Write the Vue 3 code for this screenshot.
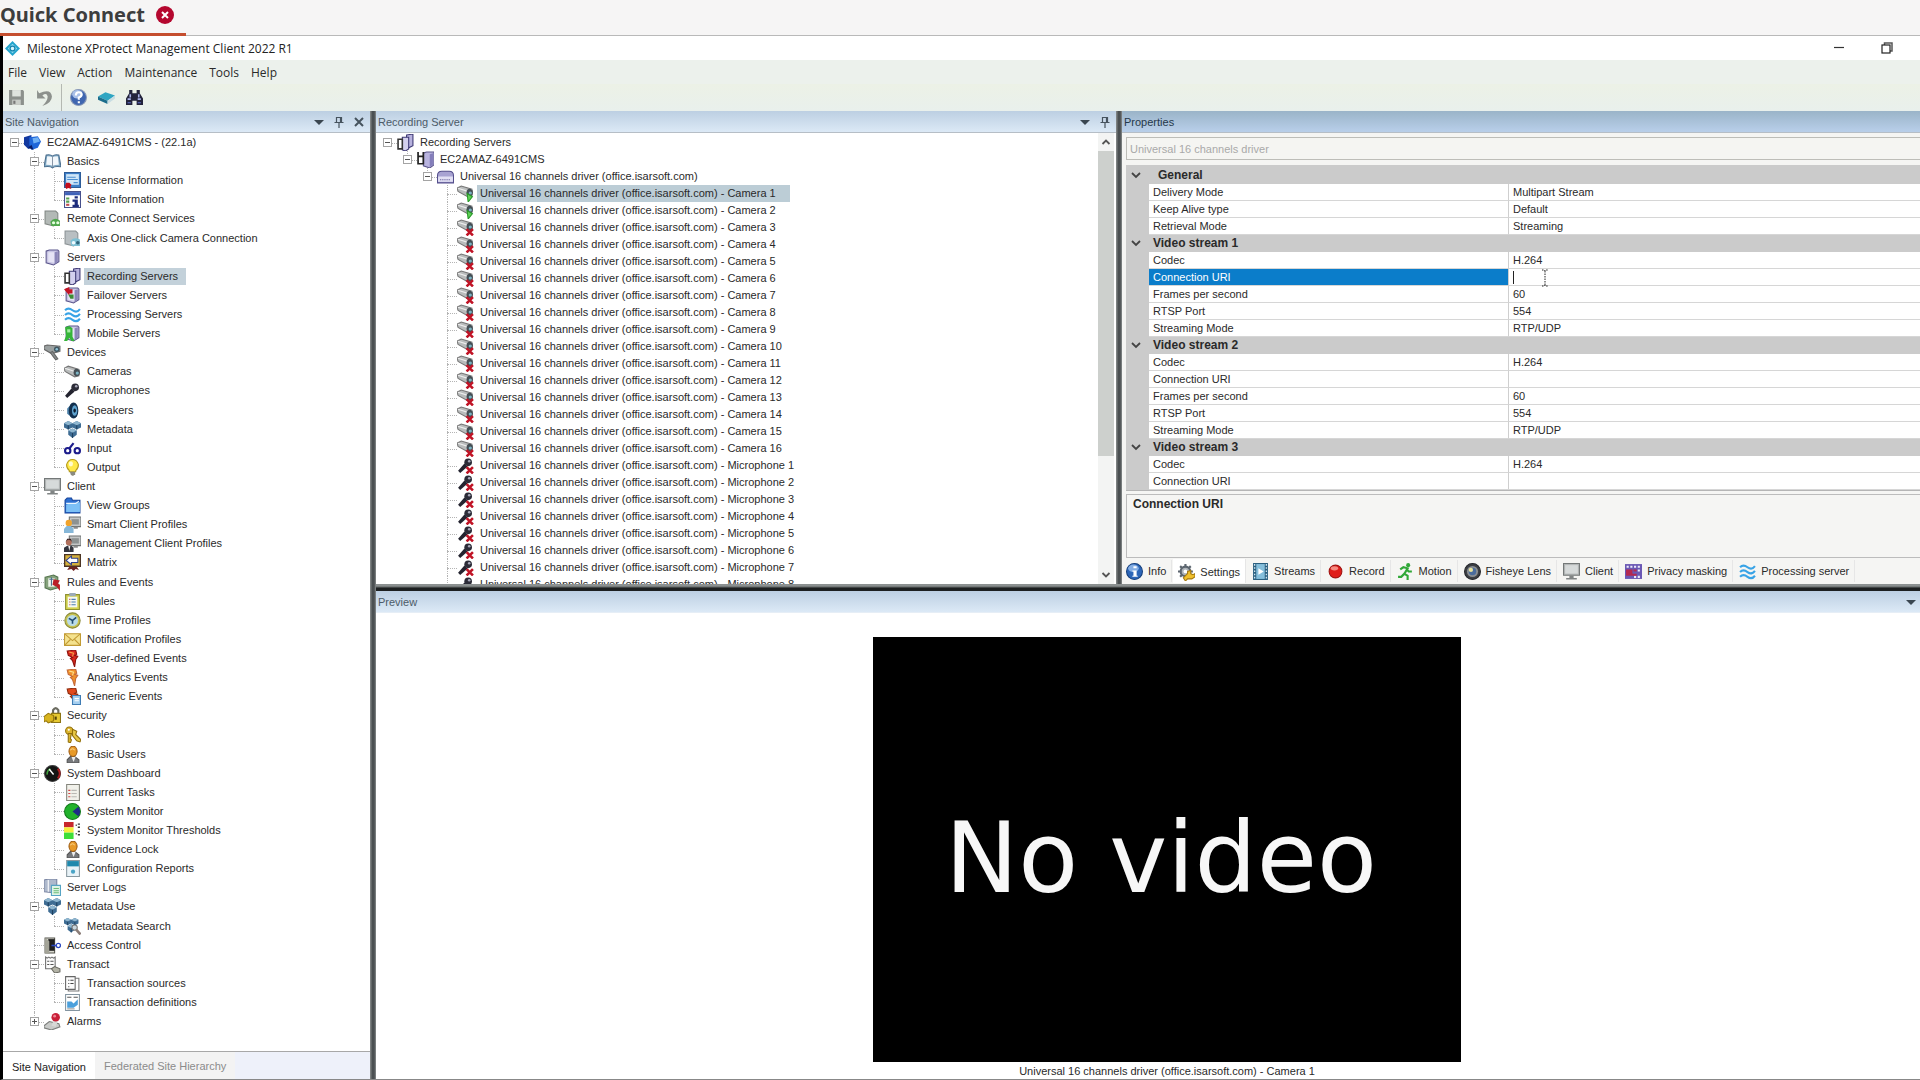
<template>
  <div class="desktop">

    <!-- ===== session tabs ===== -->
    <div class="session-bar">
      <div class="session-tab">
        <span>Quick Connect</span>
        <button class="session-close" aria-label="Close session">
          <svg viewBox="0 0 18 18"><circle cx="9" cy="9" r="9" fill="#b5082f" /><path d="M6 6l6 6M12 6l-6 6" stroke="#fff" stroke-width="2" /></svg>
        </button>
      </div>
    </div>

    <div class="window">
      <!-- ===== title ===== -->
      <div class="title-bar">
        <svg class="logo" viewBox="0 0 16 16"><path d="M8 0l8 8-8 8-8-8z" fill="#23a3cc" /><path d="M8 3l5 5-5 5-5-5z" fill="#8fdcf2" /><circle cx="8" cy="8" r="2.6" fill="#d6f5fd" stroke="#1583ad" stroke-width="1.4" /></svg>
        <span class="title-text">Milestone XProtect Management Client 2022 R1</span>
        <button class="win-btn" aria-label="Minimize"><svg viewBox="0 0 12 12"><path d="M1 5.500h10" stroke="#333" stroke-width="1.200" /></svg></button>
        <button class="win-btn" aria-label="Restore"><svg viewBox="0 0 12 12"><path d="M3.500 3V1h7.500v8H9" fill="none" stroke="#555" stroke-width="1.500" /><rect x="1" y="3" width="8" height="8" fill="#fff" stroke="#222" stroke-width="1.200" /></svg></button>
      </div>

      <!-- ===== menu + toolbar ===== -->
      <div class="menu-bar">
        <button v-for="m in menus" :key="m">{{ m }}</button>
      </div>
      <div class="tool-bar">
        <template v-for="t in tools" :key="t.icon">
          <span v-if="t.sep" class="tool-sep"></span>
          <button :aria-label="t.label"><svg class="icon" viewBox="0 0 16 16" v-html="icons[t.icon]"></svg></button>
        </template>
      </div>

      <div class="workspace">
        <!-- ===== site navigation ===== -->
        <section class="pane nav-pane">
          <header class="pane-head">
            <span>Site Navigation</span>
            <button aria-label="Options"><svg viewBox="0 0 12 12" v-html="icons.down"></svg></button>
            <button aria-label="Pin"><svg viewBox="0 0 12 12" v-html="icons.pin"></svg></button>
            <button aria-label="Close"><svg viewBox="0 0 12 12" v-html="icons.close"></svg></button>
          </header>
          <ul class="tree nav-tree" role="tree">
            <li v-for="row in navRows" :key="row.label" role="treeitem">
              <span v-for="(g, i) in row.guides" :key="i" class="guide" :class="g">
                <i v-if="g.includes('box')" class="box" :class="{ closed: row.closed }"></i>
              </span>
              <svg class="icon" viewBox="0 0 16 16" v-html="icons[row.icon]"></svg>
              <span class="label" :class="{ selected: navSelected === row.label }" @click="navSelected = row.label">{{ row.label }}</span>
            </li>
          </ul>
          <footer class="nav-tabs">
            <button class="active">Site Navigation</button>
            <button>Federated Site Hierarchy</button>
          </footer>
        </section>

        <div class="v-split"></div>

        <div class="right-side">
          <div class="top-panes">
            <!-- ===== recording server ===== -->
            <section class="pane rec-pane">
              <header class="pane-head">
                <span>Recording Server</span>
                <button aria-label="Options"><svg viewBox="0 0 12 12" v-html="icons.down"></svg></button>
                <button aria-label="Pin"><svg viewBox="0 0 12 12" v-html="icons.pin"></svg></button>
              </header>
              <div class="rec-body">
                <ul class="tree rec-tree" role="tree">
                  <li v-for="row in recRows" :key="row.label" role="treeitem">
                    <span v-for="(g, i) in row.guides" :key="i" class="guide" :class="g">
                      <i v-if="g.includes('box')" class="box"></i>
                    </span>
                    <svg class="icon" viewBox="0 0 16 16" v-html="icons[row.icon]"></svg>
                    <span class="label" :class="{ selected: recSelected === row.label }" @click="recSelected = row.label">{{ row.label }}</span>
                  </li>
                </ul>
                <div class="scroll">
                  <svg viewBox="0 0 12 12"><path d="M2.500 8L6 4.500 9.500 8" fill="none" stroke="#555" stroke-width="1.800" /></svg>
                  <div class="thumb"></div>
                  <div class="track"></div>
                  <svg viewBox="0 0 12 12"><path d="M2.500 4L6 7.500 9.500 4" fill="none" stroke="#555" stroke-width="1.800" /></svg>
                </div>
              </div>
            </section>

            <div class="v-split"></div>

            <!-- ===== properties ===== -->
            <section class="pane prop-pane">
              <header class="pane-head active">
                <span>Properties</span>
              </header>
              <div class="prop-body">
                <input class="driver" type="text" value="Universal 16 channels driver" aria-label="Driver" disabled />
                <div class="grid-box">
                  <table>
                    <colgroup>
                      <col class="col-gutter" />
                      <col class="col-name" />
                      <col />
                    </colgroup>
                    <tbody>
                      <template v-for="g in groups" :key="g.name">
                        <tr class="group">
                          <td class="gutter"><svg viewBox="0 0 12 12"><path d="M2 4l4 4 4-4" fill="none" stroke="#444" stroke-width="1.800" /></svg></td>
                          <th colspan="2" :class="{ inset: g.name === 'General' }">{{ g.name }}</th>
                        </tr>
                        <tr v-for="p in g.props" :key="g.name + p[0]" :class="{ current: p[2] }">
                          <td class="gutter"></td>
                          <td class="name">{{ p[0] }}</td>
                          <td class="value">
                            <div v-if="p[2]" class="editing">
                              <span class="caret"></span>
                              <input v-model="uri" type="text" aria-label="Connection URI" />
                              <svg class="ibeam" viewBox="0 0 8 18"><path d="M1 1h2l1 1 1-1h2M4 2v14M1 17h2l1-1 1 1h2" fill="none" stroke="#222" stroke-dasharray="1.500 1" /></svg>
                            </div>
                            <template v-else>{{ p[1] }}</template>
                          </td>
                        </tr>
                      </template>
                    </tbody>
                  </table>
                </div>
                <div class="help-box">Connection URI</div>
                <nav class="prop-tabs">
                  <button v-for="t in tabs" :key="t.label" :class="{ active: tab === t.label }" @click="tab = t.label">
                    <svg class="icon" viewBox="0 0 16 16" v-html="icons[t.icon]"></svg>
                    <span>{{ t.label }}</span>
                  </button>
                </nav>
              </div>
            </section>
          </div>

          <div class="h-split"></div>

          <!-- ===== preview ===== -->
          <section class="pane preview-pane">
            <header class="pane-head">
              <span>Preview</span>
              <button aria-label="Options"><svg viewBox="0 0 12 12" v-html="icons.down"></svg></button>
            </header>
            <div class="stage">
              <div class="video">No video</div>
              <div class="caption">{{ recSelected }}</div>
            </div>
          </section>
        </div>
      </div>
    </div>
  </div>
</template>

<script setup>
import { ref } from "vue";

const menus = ["File", "View", "Action", "Maintenance", "Tools", "Help"];

const tools = [
  { icon: "save", label: "Save" },
  { icon: "undo", label: "Undo" },
  { icon: "help", label: "Help", sep: true },
  { icon: "manual", label: "Manual" },
  { icon: "binoculars", label: "Find" }
];

/* ===== icon pieces used more than once ===== */
const tower = '<path d="M2 2l3-1h8l1 1v10l-5 3-7-2z" fill="#c9c6e4" stroke="#5b568c"/><path d="M4 3h6v10l-6-1z" fill="#e6e4f5"/><path d="M10 3l3-1v10l-3 2z" fill="#8b86b8"/>';
const screen = '<path d="M5 1h11v9H5z" fill="#c4c6c6" stroke="#6e7272"/><path d="M7 3h7v5H7z" fill="#8d9292"/><path d="M9 10h4v2H9z" fill="#8a8a8a"/>';
const cross = '<path d="M9 9.500l6 6M15 9.500l-6 6" stroke="#c01426" stroke-width="2.400"/>';
const camBody = '<path d="M0 3l4-2 10 3v6l-4 1L1 6z" fill="#b9bcbc" stroke="#777"/><path d="M1 3l9 3 4-2" fill="none" stroke="#eee"/><ellipse cx="12" cy="7" rx="3" ry="3.500" fill="#454f55"/><circle cx="12.500" cy="7.500" r="1.500" fill="#7bb4c4"/>';
const micBody = '<path d="M1 13l6-7 3 3-7 6z" fill="#23232f"/><circle cx="10.500" cy="5" r="3.600" fill="#2c2c38"/><circle cx="11.500" cy="4" r="1.200" fill="#aab"/>';
const cubes = '<path d="M0 2l4-2 4 2v4L4 8 0 6zM8 2l4-2 4 2v4l-4 2-4-2zM4 9l4-2 4 2v4l-4 3-4-3z" fill="#3e6c93"/><path d="M0 2l4-2 4 2-4 2zM8 2l4-2 4 2-4 2zM4 9l4-2 4 2-4 2z" fill="#8fb6cf"/><path d="M4 4v4M12 4v4M8 11v5" stroke="#1f4260"/>';
const person = '<path d="M3 16v-3l3-3h4l4 3v3z" fill="#77797c" stroke="#555"/><path d="M7 10l2 5 2-5z" fill="#eee"/><ellipse cx="8.500" cy="5" rx="3.800" ry="4.800" fill="#e89a28" stroke="#9c5a10"/><path d="M6 4q2-3 4 0" stroke="#f9d185" fill="none"/>';
const waves = '<path d="M1 4q3-3 7 0t7-1M1 8.500q3-3 7 0t7-1M1 13q3-3 7 0t7-1" fill="none" stroke="#38a3e6" stroke-width="2"/>';
const boltShape = '<path d="M3 1l8-1 1 4-2 1 3 1-2 3-1 7-2-6-2-2 2-1-4-2z"';

const icons = {
  down: '<path d="M1 4h10L6 9z" fill="#3a4650"/>',
  pin: '<path d="M3.500 1.500h5v5h-5zM1.500 6.500h9M6 7v5M7.500 2v4" fill="none" stroke="#46535e" stroke-width="1.200"/>',
  close: '<path d="M2 2l8 8M10 2l-8 8" stroke="#46535e" stroke-width="2"/>',
  save: '<path d="M1 1h13l1 1v13H1z" fill="#8c908c"/><path d="M4 1h8v6H4z" fill="#dfe3de"/><path d="M4 10h8v5H4z" fill="#c9cdc8"/><path d="M5 11h2v3H5z" fill="#777"/>',
  undo: '<path d="M1 1v8h8L6 6q4-3 5 1 0 4-5 9 9-3 9-9-1-8-12-3z" fill="#8d918d"/>',
  help: '<circle cx="8" cy="8" r="7.500" fill="#3f66b0" stroke="#8c9bb8"/><ellipse cx="7" cy="5" rx="5" ry="4" fill="#a9c0e8"/><path d="M5.500 6q0-3 2.700-3t2.600 2.400Q10.800 7 8.300 8v2M8.300 11.500v2" fill="none" stroke="#fff" stroke-width="2"/>',
  manual: '<path d="M0 7l7-4 9 3-7 5z" fill="#2fa5c2"/><path d="M0 7v3l9 4v-3z" fill="#1b6d8c"/><path d="M9 11v3l7-5V6z" fill="#c8dde3"/>',
  binoculars: '<path d="M3 1h3v3h4V1h3v3l3 5v6h-6v-4H6v4H0V9l3-5z" fill="#23233c"/><path d="M1.500 9.500h3M11 9.500h3M4 5v3M12 5v3" stroke="#aab2e8" stroke-width="1.500"/><path d="M1.500 13h3M11 13h3" stroke="#5f6dc8"/>',
  site: '<path d="M0 3l7-2v12l-3 1-4-4z" fill="#1239a0"/><path d="M5 3l8-1 3 5-3 6-6 2-2-5z" fill="#1f66d8"/><path d="M8 4l5-1 2 4-6 2z" fill="#6fb0f4"/><path d="M7 10l2 5-5-2z" fill="#0a1d66"/>',
  book: '<path d="M0 13L2 2q4-1 6 1 2-2 6-1l2 11q-6-1-8 1-2-2-8-1z" fill="#7fa8c4" stroke="#4c6f8e"/><path d="M2 11l1-8q4 0 5 1v8q-2-1-6-1zM14 11l-1-8q-4 0-5 1v8q2-1 6-1z" fill="#f2f7fb"/><path d="M8 3v10" stroke="#8896a8"/>',
  license: '<path d="M.500.500h15v14H.500z" fill="#3d7fc8" stroke="#2d5c98"/><path d="M2 2h12v10H2z" fill="#cfe6f8"/><path d="M3 5h8M3 7h10M9 10h4" stroke="#4c8fd0"/><path d="M2 10h3l2 2-1 2 1 2-3-1-2 1-1-3z" fill="#c40e1c"/>',
  siteinfo: '<path d="M.500.500h15v15H.500z" fill="#fff" stroke="#46508c"/><path d="M1 1h14v3H1z" fill="#3f62b8"/><path d="M2 6h3v2H2zM2 9h3v2H2z" fill="#58a050"/><path d="M2 12h3v2H2z" fill="#c05050"/><path d="M10 5h3v2h-3zM8 8h5v5h1v2H8v-2h2v-3H8z" fill="#1c2c7c"/>',
  remote: '<path d="M1 1h10l2 2v9l-4 3-8-2z" fill="#b3b9b6" stroke="#808683"/><path d="M6 11q4-5 9-1v5H7z" fill="#4fa84c"/><circle cx="9" cy="12" r="1.500" fill="#e7ffe0"/><circle cx="13" cy="12" r="1.500" fill="#e7ffe0"/>',
  axis: '<path d="M1 1h10l2 2v9l-4 3-8-2z" fill="#b9bfc2" stroke="#8a9194"/><path d="M6 10q4-4 9-1v6H7z" fill="#7ec0d4"/><circle cx="9" cy="12" r="1.700" fill="#effaff"/><circle cx="13" cy="12" r="1.700" fill="#31647a"/>',
  server: tower,
  servers: '<path d="M9 1l6-1v11l-4 2-2-1z" fill="#b7b2de" stroke="#3d3874"/><path d="M5 3h6v11l-3 2-3-1z" fill="#d3d0ee" stroke="#3d3874"/><path d="M1 5h4v9H1z" fill="#fff" stroke="#333" stroke-width="1.500"/>',
  recserver: '<path d="M6 2l3-1h7v12l-4 3-6-2z" fill="#b9b4e0" stroke="#5b568c"/><path d="M12 3l3-1v11l-3 2z" fill="#837dba"/><path d="M1 1v11h5V1M1 5h5" fill="none" stroke="#222" stroke-width="1.600"/>',
  failover: tower + '<path d="M0 2l5-2v2h3v4H5v2z" fill="#c41424"/><path d="M4 7h5v4H6z" fill="#3c8c34"/>',
  waves,
  mobile: tower + '<path d="M1 2l4-1 3 2v8l2 4H7l-2-3-2 3H0l2-5z" fill="#36b53a"/><path d="M3 4h3v3H3z" fill="#a4eea0"/>',
  devices: '<path d="M0 2l3-1 12 1v5l-8 2-7-4z" fill="#9aa0a0" stroke="#666"/><path d="M6 8l2 3 3 4 2-1-5-7z" fill="#888d8d" stroke="#666"/><circle cx="12" cy="5" r="2.600" fill="#3f5560"/><circle cx="12" cy="5" r="1.200" fill="#8dc3d6"/>',
  camera: '<g transform="translate(0 2)">' + camBody + '</g>',
  camOn: camBody + '<path d="M9.500 8l5 3-4 5z" fill="#62d058" stroke="#279a28"/>',
  camOff: camBody + cross,
  mic: micBody,
  micOff: micBody + cross,
  speaker: '<path d="M3 6l5-5v14l-5-4z" fill="#4a7fa8"/><ellipse cx="9" cy="8" rx="4.500" ry="7.500" fill="#12304e"/><ellipse cx="10" cy="8" rx="2.500" ry="5" fill="#5fa3cf"/><ellipse cx="10" cy="8" rx="1.200" ry="2" fill="#0c1c30"/>',
  metadata: cubes,
  metasearch: '<g transform="scale(.85)">' + cubes + '</g><circle cx="10" cy="9" r="2.500" fill="#c9d6de" stroke="#777"/><path d="M11.500 11l4 4.500" stroke="#8b7d78" stroke-width="2.500"/>',
  input: '<circle cx="3.500" cy="10" r="2.500" fill="none" stroke="#1c1c8c" stroke-width="2"/><circle cx="12.500" cy="10" r="2.500" fill="none" stroke="#1c1c8c" stroke-width="2"/><path d="M5 8l4-5" stroke="#1c1c8c" stroke-width="2"/>',
  bulb: '<path d="M5 11Q2 8 2.500 5 4 .500 8 .500T13.500 5q.500 3-2.500 6v1H5z" fill="#ffe94a" stroke="#b59a18"/><ellipse cx="6.500" cy="4.500" rx="2" ry="2.500" fill="#fffbd0"/><path d="M5.500 12h5v3h-1l-1 1-2-1z" fill="#8b8b80"/>',
  monitor: '<path d="M.500.500h15v11H.500z" fill="#b4b8b8" stroke="#747878"/><path d="M2 2h12v8H2z" fill="#d6dada"/><path d="M6 12h4v2h3v1.500H3V14h3z" fill="#808484"/>',
  folder: '<path d="M1 3l2-2h4l1 2h7v12H1z" fill="#2c6fd0" stroke="#17459c"/><path d="M2 7l4-1 9-1v9H2z" fill="#7cc0f6"/><path d="M2 6h9l3-2" fill="none" stroke="#eaf6ff"/>',
  smart: screen + '<path d="M0 16v-4l3-3h3l3 3v4z" fill="#86b7d8"/><circle cx="4.500" cy="6.500" r="3" fill="#f0a32c"/>',
  mgmt: screen + '<path d="M0 16v-4l3-2h4l2 2v4z" fill="#33353e"/><path d="M4 10h2l-1 5z" fill="#f4f4f4"/><circle cx="4.500" cy="7" r="2.800" fill="#b0705c"/><path d="M1.500 6.500q3-4 6 0l-1-3H3z" fill="#3a2020"/>',
  matrix: '<path d="M.500.500h15v11H.500z" fill="#d6b23e" stroke="#4b3424" stroke-width="1.500"/><path d="M2 6l5-4v2h6v4H7v2z" fill="#fff" stroke="#2e3f8c"/><path d="M5 12h7l2 3-3-1-2 2-2-2-4 1z" fill="#6f2420"/>',
  rulesevents: '<path d="M1 3l8-2 4 2v10l-7 2-5-2z" fill="#86a37c" stroke="#54744e"/><path d="M4 4h6v8H4z" fill="#eef5ea"/><path d="M5 5h4M7 3v8" stroke="#4c6e90"/><path d="M9 5l6 1-2 3 2 1v6l-3-4-4-2z" fill="#bb1e28"/>',
  rules: '<path d="M1.500 1.500h13v14h-13z" fill="#d3d24e" stroke="#8e9030"/><path d="M3.500 3.500h9v10h-9z" fill="#f6faf2"/><path d="M5 0h6v3H5z" fill="#9cabb8"/><path d="M5 6h1M5 8.500h1M5 11h1" stroke="#c03838"/><path d="M7 6h4M7 8.500h4M7 11h4" stroke="#4c7cb0"/>',
  clock: '<circle cx="8" cy="8" r="7.200" fill="#c8c452" stroke="#8a8a3a"/><circle cx="8" cy="8" r="5.200" fill="#b9dbe8"/><path d="M4.500 6L8 8l3.500-3M8 8v3" stroke="#1f4c70" fill="none" stroke-width="1.500"/>',
  mail: '<path d="M.500 2.500h15v11H.500z" fill="#f4e28e" stroke="#c29b34"/><path d="M1 3l7 6 7-6M1 13l5-5M15 13l-5-5" fill="none" stroke="#c29b34"/>',
  boltred: boltShape + ' fill="#d8281c" stroke="#8c120c"/><path d="M5 2l4 1-1 3" stroke="#f7a04a" fill="none"/>',
  boltorange: boltShape + ' fill="#f0912a" stroke="#c46a3a"/><path d="M5 2l4 1-1 3" stroke="#fde08c" fill="none"/>',
  generic: boltShape + ' fill="#e0481c" stroke="#8c2a0c"/><path d="M8 7h7.500v8.500H8z" fill="#a5cff0" stroke="#3f7cb4"/><path d="M10 10h4M10 12h4" stroke="#fff"/>',
  lock: '<path d="M8.500 6V3q2.500-4 5 0v4" fill="none" stroke="#6b6b60" stroke-width="2"/><path d="M7 6h8.500v8.500H7z" fill="#e5c832" stroke="#8c7414"/><path d="M0 9l4-3 5 2v5l-5 2-2-2-2 1z" fill="#d8b41e" stroke="#97780e"/><path d="M11 9v3" stroke="#554408" stroke-width="2"/>',
  keys: '<circle cx="5" cy="4.500" r="3.500" fill="#dcb52e" stroke="#92700c"/><path d="M4 7v8l2 1 1-3-1-1 1-5z" fill="#dcb52e" stroke="#92700c"/><path d="M8 3l4 2-1 3 5 5-1 2-3-1-4-5z" fill="#e8c845" stroke="#92700c"/><circle cx="4.500" cy="3.500" r="1" fill="#fff"/>',
  user: person,
  gauge: '<circle cx="8" cy="8" r="7.500" fill="#141414" stroke="#404040"/><path d="M13 3.500a7 7 0 010 9" stroke="#a81c20" stroke-width="2" fill="none"/><path d="M3 9a5.500 5.500 0 013-5.500" stroke="#3f9e3c" stroke-width="1.500" fill="none"/><path d="M5 4l4 5" stroke="#fff" stroke-width="1.400"/>',
  tasks: '<path d="M2.500.500h12v15h-12z" fill="#f1f1ea" stroke="#85857c"/><path d="M4 6h2M4 9h2M4 12h2" stroke="#d04848"/><path d="M7 6h5M7 9h5M7 12h5" stroke="#b9b9b4"/>',
  pie: '<circle cx="8" cy="8" r="7.500" fill="#22b22c" stroke="#147a1c"/><path d="M8 8l5.500-4.500a7.500 7.500 0 010 9z" fill="#1e2a86"/>',
  thresholds: '<path d="M0 0h9v5H0z" fill="#c8282c"/><path d="M0 5h9v5H0z" fill="#f5ee3c"/><path d="M0 10h9v6H0z" fill="#3ede3a"/><path d="M11 3h1M13 2h2M13 5h2M11 11h1M13 9h2M13 12h2" stroke="#333" stroke-width="1.400"/>',
  report: '<path d="M2.500.500h12v15h-12z" fill="#e9f3f8" stroke="#8898a0"/><path d="M3 1h11v5H3z" fill="#1f88ac"/><circle cx="8.500" cy="11" r="2" fill="#4aa4c6"/>',
  logs: '<path d="M0 1l4-1h8v11l-3 2-9-1z" fill="#aeb9cc" stroke="#7782a0"/><path d="M4 1v11" stroke="#fff"/><path d="M7 6h8.500v9.500H7z" fill="#dff4e4" stroke="#56a4c4"/><path d="M9 9h5M9 11h5M9 13h5" stroke="#6cbc78"/>',
  door: '<path d="M1 1h9v14H1z" fill="#d9d9cf" stroke="#55554c"/><path d="M4 2h6v11H4z" fill="#1e1e1e"/><path d="M1 1l4 3v12l-4-1z" fill="#a4a498"/><circle cx="13.500" cy="8" r="2" fill="#fff" stroke="#2c48c0" stroke-width="1.200"/><path d="M7 8h5" stroke="#2c48c0" stroke-width="1.500"/>',
  transact: '<path d="M1.500 1l1.500 1 1.500-1L6 2l1.500-1L9 2l1.500-1v11h-9z" fill="#fbfbfb" stroke="#6f6f6f"/><path d="M3 5h2M3 8h2M6 5h3M6 8h3" stroke="#555"/><path d="M7 12l3-2 5 2v3l-5 1z" fill="#b3b3a6" stroke="#686860"/>',
  sources: '<path d="M4 3h10v12H4z" fill="#fff" stroke="#777"/><path d="M1.500 1.500h9v12h-9z" fill="#fcfcfc" stroke="#666"/><path d="M4 5h1M4 8h1M4 11h1M6 5h3M6 8h3" stroke="#444"/>',
  defs: '<path d="M1.500.500h13v15h-13z" fill="#fff" stroke="#8394a0"/><path d="M3 3h4M9 3h4" stroke="#555"/><path d="M3 7h4l2 2 4-4v5l-4 3H3z" fill="#4ba0dc"/><path d="M3 14h7" stroke="#999"/>',
  alarm: '<path d="M0 12l5-4 9 2 1 3-8 3-7-2z" fill="#c8cac8" stroke="#7b7d7b"/><path d="M9 7l-2 5 4 1 2-5z" fill="#d7d9d7"/><circle cx="11" cy="4" r="4" fill="#c91f38"/><circle cx="10" cy="3" r="1.300" fill="#ee8594"/>',
  box16: '<path d="M.500 7q0-4 4-4h7q4 0 4 4v7H.500z" fill="#a8a3d2" stroke="#544f8c"/><path d="M1 8h14v5H1z" fill="#e2e0f4"/><path d="M3 11h10" stroke="#544f8c" stroke-dasharray="1 1"/>',
  info: '<circle cx="8" cy="8" r="7.500" fill="#2c66b8" stroke="#17407c"/><ellipse cx="7" cy="5" rx="5" ry="3.500" fill="#84aee4"/><path d="M7 3h3v2H7zM6 7h4v5h1v1H6v-1h1V8H6z" fill="#fff"/>',
  gear: '<circle cx="7" cy="7" r="4.500" fill="#aeb4ba" stroke="#5d6670" stroke-width="2"/><path d="M7 0v3M7 11v3M0 7h3M11 7h3M2 2l2 2M12 2l-2 2M2 12l2-2" stroke="#5d6670" stroke-width="2"/><circle cx="7" cy="7" r="1.800" fill="#fff"/><path d="M5 13l4-4V7l3-1v3l2 1 2-1v3l-3 2H9l-2 2z" fill="#f0c02c" stroke="#a67a10"/>',
  film: '<path d="M1 0h14v16H1z" fill="#2a5f80"/><path d="M4 1h8v14H4z" fill="#86bfdc"/><path d="M6 5l5 3-5 3z" fill="#fff"/><path d="M2.500 1v14M13.500 1v14" stroke="#d4e8f2" stroke-width="1.200" stroke-dasharray="1.500 1.500"/>',
  record: '<circle cx="8" cy="8" r="6" fill="#e01d1a" stroke="#a01210"/><ellipse cx="7" cy="5" rx="3.500" ry="2" fill="#f58a80"/>',
  motion: '<circle cx="10.500" cy="2" r="1.900" fill="#31a838"/><path d="M3 6l3-2 4 1-3 5 3 2v4M7 10l-3 3H1M9 6l2 2h3" fill="none" stroke="#31a838" stroke-width="2"/>',
  lens: '<circle cx="8" cy="8" r="7.500" fill="#3c3f44" stroke="#26282c"/><circle cx="8" cy="8" r="5.200" fill="#8b9094"/><circle cx="8" cy="8" r="3.500" fill="#4a6c9c"/><circle cx="6.500" cy="6.500" r="2" fill="#e9e39c"/>',
  mask: '<path d="M0 1h16v14H0z" fill="#6a58b4"/><path d="M1.500 2.500h2v2h-2zM5 2.500h2v2H5zM8.500 2.500h2v2h-2zM12 2.500h2v2h-2zM12 6h2v2h-2zM12 12h2v2h-2zM8.500 12h2v2h-2z" fill="#eceafa"/><path d="M1 6h6v4h4v2H1zM8 6h3v2H8z" fill="#b42850"/>'
};

/* ===== trees: [depth, icon, label, closed] ===== */
const nav = [
  [0, "site", "EC2AMAZ-6491CMS - (22.1a)"],
  [1, "book", "Basics"],
  [2, "license", "License Information"],
  [2, "siteinfo", "Site Information"],
  [1, "remote", "Remote Connect Services"],
  [2, "axis", "Axis One-click Camera Connection"],
  [1, "server", "Servers"],
  [2, "servers", "Recording Servers"],
  [2, "failover", "Failover Servers"],
  [2, "waves", "Processing Servers"],
  [2, "mobile", "Mobile Servers"],
  [1, "devices", "Devices"],
  [2, "camera", "Cameras"],
  [2, "mic", "Microphones"],
  [2, "speaker", "Speakers"],
  [2, "metadata", "Metadata"],
  [2, "input", "Input"],
  [2, "bulb", "Output"],
  [1, "monitor", "Client"],
  [2, "folder", "View Groups"],
  [2, "smart", "Smart Client Profiles"],
  [2, "mgmt", "Management Client Profiles"],
  [2, "matrix", "Matrix"],
  [1, "rulesevents", "Rules and Events"],
  [2, "rules", "Rules"],
  [2, "clock", "Time Profiles"],
  [2, "mail", "Notification Profiles"],
  [2, "boltred", "User-defined Events"],
  [2, "boltorange", "Analytics Events"],
  [2, "generic", "Generic Events"],
  [1, "lock", "Security"],
  [2, "keys", "Roles"],
  [2, "user", "Basic Users"],
  [1, "gauge", "System Dashboard"],
  [2, "tasks", "Current Tasks"],
  [2, "pie", "System Monitor"],
  [2, "thresholds", "System Monitor Thresholds"],
  [2, "user", "Evidence Lock"],
  [2, "report", "Configuration Reports"],
  [1, "logs", "Server Logs"],
  [1, "metadata", "Metadata Use"],
  [2, "metasearch", "Metadata Search"],
  [1, "door", "Access Control"],
  [1, "transact", "Transact"],
  [2, "sources", "Transaction sources"],
  [2, "defs", "Transaction definitions"],
  [1, "alarm", "Alarms", true]
];

const driver = "Universal 16 channels driver (office.isarsoft.com)";
const rec = [
  [0, "servers", "Recording Servers"],
  [1, "recserver", "EC2AMAZ-6491CMS"],
  [2, "box16", driver]
];
for (let n = 1; n <= 16; n++) {
  rec.push([3, n < 3 ? "camOn" : "camOff", `${driver} - Camera ${n}`]);
}
for (let n = 1; n <= 8; n++) {
  rec.push([3, "micOff", `${driver} - Microphone ${n}`]);
}

// one guide cell per level: blank, a passing line, or the joint of the row itself
function buildRows(list) {
  return list.map(([depth, icon, label, closed], i) => {
    const guides = [];
    for (let d = 0; d <= depth; d++) {
      const next = list.slice(i + 1).find(r => r[0] <= d);
      const more = d > 0 && next && next[0] === d;
      if (d < depth) {
        guides.push(more ? "line" : "blank");
        continue;
      }
      const parent = closed || (list[i + 1] && list[i + 1][0] > depth);
      const joint = d === 0 ? "root" : more ? "tee" : "end";
      guides.push(parent ? joint + " box-cell" : joint);
    }
    return { icon, label, closed, guides };
  });
}

const navRows = buildRows(nav);
const recRows = buildRows(rec);

const navSelected = ref("Recording Servers");
const recSelected = ref(`${driver} - Camera 1`);

/* ===== properties ===== */
const stream = editing => [
  ["Codec", "H.264"],
  ["Connection URI", "", editing],
  ["Frames per second", "60"],
  ["RTSP Port", "554"],
  ["Streaming Mode", "RTP/UDP"]
];

const groups = [
  {
    name: "General",
    props: [
      ["Delivery Mode", "Multipart Stream"],
      ["Keep Alive type", "Default"],
      ["Retrieval Mode", "Streaming"]
    ]
  },
  { name: "Video stream 1", props: stream(true) },
  { name: "Video stream 2", props: stream(false) },
  { name: "Video stream 3", props: stream(false).slice(0, 2) }
];

const uri = ref("");

const tab = ref("Settings");
const tabs = [
  { icon: "info", label: "Info" },
  { icon: "gear", label: "Settings" },
  { icon: "film", label: "Streams" },
  { icon: "record", label: "Record" },
  { icon: "motion", label: "Motion" },
  { icon: "lens", label: "Fisheye Lens" },
  { icon: "monitor", label: "Client" },
  { icon: "mask", label: "Privacy masking" },
  { icon: "waves", label: "Processing server" }
];
</script>

<style>
body {
  margin: 0;
  overflow: hidden;
}
</style>

<style scoped>
.desktop {
  height: 100vh;
  display: flex;
  flex-direction: column;
  background: #f6f5f5;
  font-family: "Liberation Sans", Arial, sans-serif;
  font-size: 11px;
  color: #2a2a2a;
  overflow: hidden;
}

button {
  border: none;
  background: none;
  padding: 0;
  margin: 0;
  font: inherit;
  color: inherit;
}

svg {
  display: block;
  flex: none;
}

.icon {
  width: 17px;
  height: 17px;
}

/* ===== session tabs ===== */
.session-bar {
  flex: none;
  height: 35px;
  border-bottom: 1px solid #b9b9b9;
}

.session-tab {
  box-sizing: border-box;
  width: 186px;
  height: 36px;
  display: flex;
  align-items: center;
  gap: 11px;
  padding-bottom: 4px;
  border-bottom: 3px solid #c54e2e;
  font-family: "Noto Sans", "Open Sans", sans-serif;
  font-size: 20px;
  font-weight: 700;
  color: #3d3d3d;
  white-space: nowrap;
}

.session-close svg {
  width: 18px;
  height: 18px;
}

/* ===== window ===== */
.window {
  flex: 1;
  min-height: 0;
  display: flex;
  flex-direction: column;
  border-left: 3px solid #000;
  border-bottom: 1px solid #888;
  background: #ecf0ec;
}

.title-bar {
  flex: none;
  height: 24px;
  display: flex;
  align-items: center;
  background: #fff;
  font-family: "Open Sans", "Noto Sans", sans-serif;
  font-size: 12px;
  color: #222;
}

.logo {
  width: 15px;
  height: 15px;
  margin: 0 7px 0 2px;
}

.title-text {
  flex: 1;
}

.win-btn {
  width: 48px;
  display: flex;
  justify-content: center;
}

.win-btn:last-child {
  margin-right: 9px;
}

.win-btn svg {
  width: 12px;
  height: 12px;
}

.menu-bar {
  flex: none;
  height: 24px;
  display: flex;
  align-items: center;
  gap: 12px;
  padding-left: 5px;
  background: #ecf1ec;
  font-family: "Open Sans", "Noto Sans", sans-serif;
  font-size: 12px;
}

.tool-bar {
  flex: none;
  height: 27px;
  display: flex;
  align-items: center;
  gap: 11px;
  padding-left: 5px;
  background: linear-gradient(#ecf1e6, #e9f0ec);
}

.tool-sep {
  align-self: stretch;
  width: 1px;
  margin: 0 -3px;
  background: #b4b8b2;
}

.workspace {
  flex: 1;
  min-height: 0;
  display: flex;
}

/* ===== panes ===== */
.pane {
  display: flex;
  flex-direction: column;
  min-width: 0;
  min-height: 0;
  background: #fff;
}

.pane-head {
  flex: none;
  height: 21px;
  display: flex;
  align-items: center;
  gap: 8px;
  padding: 0 5px 0 2px;
  background: linear-gradient(#bccfe2, #dce9f6);
  border-bottom: 1px solid #b6bec6;
  color: #4c5b68;
}

.pane-head span {
  flex: 1;
}

.pane-head svg {
  width: 12px;
  height: 12px;
}

.pane-head.active {
  background: linear-gradient(#9ab4c8, #b9cfea);
  color: #25384a;
}

.nav-pane {
  flex: none;
  width: 367px;
}

.v-split {
  flex: none;
  width: 6px;
  background: linear-gradient(90deg, #8a8e8e, #4b5052 40%, #4b5052 70%, #8a8e8e);
}

.right-side {
  flex: 1;
  min-width: 0;
  display: flex;
  flex-direction: column;
}

.top-panes {
  flex: 473;
  min-height: 0;
  display: flex;
}

.h-split {
  flex: none;
  height: 7px;
  background: linear-gradient(#8b9090 30%, #1c1f20 60%, #1c1f20);
}

/* ===== trees ===== */
.tree {
  list-style: none;
  margin: 0;
  padding: 0 0 0 1px;
  overflow: hidden;
}

.tree li {
  display: flex;
  align-items: center;
  white-space: nowrap;
}

.nav-tree {
  flex: 1;
  min-height: 0;
  display: flex;
  flex-direction: column;
  padding-bottom: 20px;
}

.nav-tree li {
  flex: 1;
  min-height: 0;
}

.guide {
  position: relative;
  align-self: stretch;
  flex: none;
  width: 20px;
  display: flex;
  align-items: center;
  justify-content: center;
}

.guide.line::before,
.guide.tee::before,
.guide.end::before {
  content: "";
  position: absolute;
  left: 10px;
  top: 0;
  bottom: 0;
  border-left: 1px dotted #b4b4b4;
}

.guide.end::before {
  bottom: 50%;
}

.guide.tee::after,
.guide.end::after,
.guide.root::after {
  content: "";
  position: absolute;
  left: 10px;
  right: 0;
  top: 50%;
  border-top: 1px dotted #b4b4b4;
}

.box {
  position: relative;
  z-index: 1;
  box-sizing: border-box;
  width: 9px;
  height: 9px;
  border: 1px solid #a4a4a4;
  background: linear-gradient(#555, #555) center / 5px 1px no-repeat #fff;
}

.box.closed {
  background:
    linear-gradient(#555, #555) center / 5px 1px no-repeat,
    linear-gradient(#555, #555) center / 1px 5px no-repeat #fff;
}

.label {
  margin-left: 3px;
  padding: 0 3px;
  line-height: 17px;
}

.nav-tree .label.selected {
  padding-right: 8px;
  background: #c3d1da;
}

/* ===== nav tabs ===== */
.nav-tabs {
  flex: none;
  height: 27px;
  display: flex;
  align-items: stretch;
  border-top: 1px solid #a8a8a8;
  background: #eef1fa;
}

.nav-tabs button {
  padding: 0 9px;
  color: #8b8b8b;
  background: #f3f3f3;
}

.nav-tabs .active {
  padding: 2px 9px 0;
  color: #222;
  background: #fff;
}

/* ===== recording server ===== */
.rec-pane {
  flex: 740;
}

.rec-body {
  flex: 1;
  min-height: 0;
  display: flex;
}

.rec-tree {
  flex: 1;
  padding-top: 1px;
}

.rec-tree li {
  height: 17px;
}

.rec-tree .label.selected {
  padding-right: 14px;
  background: #bccdd6;
}

.scroll {
  width: 16px;
  margin-right: 2px;
  display: flex;
  flex-direction: column;
  align-items: center;
  background: #f3f4f3;
}

.scroll svg {
  width: 12px;
  height: 18px;
}

.thumb {
  flex: 305;
  width: 100%;
  background: #cdd0cd;
}

.track {
  flex: 110;
}

/* ===== properties ===== */
.prop-pane {
  flex: 798;
  background: #f5f5f3;
}

.prop-body {
  flex: 1;
  min-height: 0;
  display: flex;
  flex-direction: column;
  padding: 4px 0 0 4px;
}

.driver {
  flex: none;
  box-sizing: border-box;
  width: 100%;
  height: 23px;
  padding: 0 3px;
  border: 1px solid #bdbdb8;
  border-right: none;
  background: #f5f5f2;
  font: inherit;
  color: #a9a9a9;
}

.grid-box {
  flex: none;
  margin-top: 5px;
  padding-top: 2px;
  border-bottom: 1px solid #b5b5b5;
  background: #cbcbcb;
}

table {
  width: 100%;
  border-collapse: separate;
  border-spacing: 0;
  table-layout: fixed;
}

.col-gutter {
  width: 23px;
}

.col-name {
  width: 360px;
}

tr {
  height: 17px;
}

td,
th {
  box-sizing: border-box;
  height: 17px;
  padding: 0 0 0 4px;
  line-height: 16px;
  text-align: left;
  background: #fff;
  border-bottom: 1px solid #d6d6d6;
  white-space: nowrap;
}

th {
  font-size: 12px;
}

th.inset {
  padding-left: 9px;
}

td.gutter,
.group td,
.group th {
  background: #cbcbcb;
  border-bottom-color: #cbcbcb;
}

td.gutter svg {
  width: 12px;
  height: 12px;
}

td.name {
  border-right: 1px solid #cfcfcf;
}

.current .name {
  background: #0b7dca;
  color: #fff;
}

.editing {
  position: relative;
  display: flex;
  align-items: center;
  height: 16px;
}

.caret {
  width: 1px;
  height: 13px;
  background: #222;
}

.editing input {
  flex: 1;
  min-width: 0;
  height: 14px;
  padding: 0 2px;
  border: none;
  outline: none;
  font: inherit;
}

/* pointer resting over the edited value */
.ibeam {
  position: absolute;
  left: 28px;
  top: 0;
  width: 8px;
  height: 18px;
}

.help-box {
  flex: 1;
  min-height: 0;
  margin-top: 3px;
  padding: 2px 6px;
  border: 1px solid #bcbcbc;
  border-right: none;
  font-size: 12px;
  font-weight: 700;
}

.prop-tabs {
  flex: none;
  height: 26px;
  display: flex;
  align-items: center;
  gap: 1px;
}

.prop-tabs button {
  height: 22px;
  display: flex;
  align-items: center;
  gap: 5px;
  padding: 0 5px;
  border-right: 1px solid #e6e6e6;
  white-space: nowrap;
}

.prop-tabs button:first-child {
  padding-left: 0;
}

.prop-tabs .active {
  height: 24px;
  padding-top: 2px;
  background: #fff;
}

/* ===== preview ===== */
.preview-pane {
  flex: 488;
}

.preview-pane .pane-head {
  border-bottom-color: #e6eef6;
  padding-right: 3px;
}

.stage {
  flex: 1;
  min-height: 0;
  display: flex;
  flex-direction: column;
  align-items: center;
  padding: 24px 0 0 38px;
}

.video {
  box-sizing: border-box;
  flex: 1;
  min-height: 0;
  aspect-ratio: 588 / 425;
  display: flex;
  align-items: center;
  justify-content: center;
  padding: 16px 12px 0 0;
  background: #000;
  color: #f7f7f7;
  font-family: "DejaVu Sans", sans-serif;
  font-size: 98px;
  white-space: nowrap;
}

.caption {
  flex: none;
  padding-top: 2px;
  line-height: 15px;
}
</style>
